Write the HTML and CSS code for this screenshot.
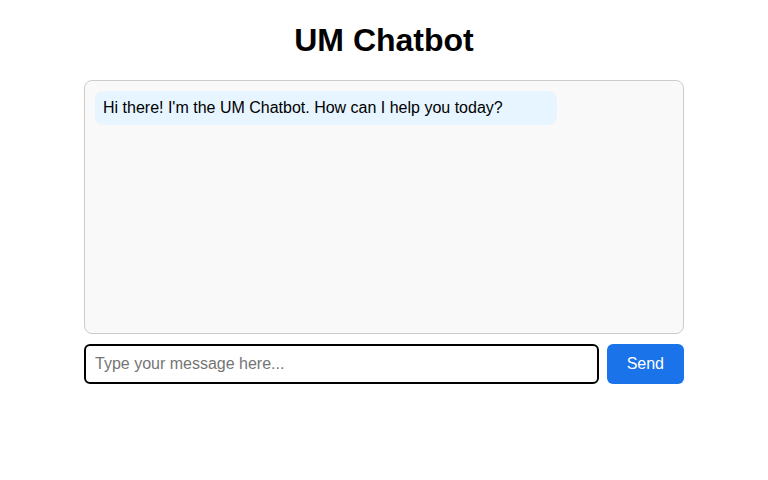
FILE: index.html
```html
<!DOCTYPE html>
<html lang="en">
<head>
  <meta charset="UTF-8">
  <meta name="viewport" content="width=device-width, initial-scale=1.0">
  <title>UM Chatbot</title>
  <link rel="stylesheet" href="styles.css">
</head>
<body>
  <h1>UM Chatbot</h1>

  <div id="chatBox" class="chat-box">
    <div class="message bot">Hi there! I'm the UM Chatbot. How can I help you today?</div>
  </div>

  <form id="chatForm" class="input-row">
    <input type="text" id="userInput" placeholder="Type your message here...">
    <button type="submit">Send</button>
  </form>
</body>
</html>
```

FILE: styles.css
```css
body {
  font-family: "Liberation Sans", Arial, sans-serif;
  max-width: 600px;
  margin: 0 auto;
  padding: 0;
  background-color: white;
}
h1 {
  text-align: center;
  font-size: 32px;
  margin: 22px 0 21px;
  line-height: 37px;
}
.chat-box {
  box-sizing: border-box;
  height: 254px;
  border: 1px solid #ccc;
  border-radius: 8px;
  padding: 10px;
  background-color: #f9f9f9;
  overflow-y: auto;
}
.message {
  box-sizing: border-box;
  width: 80%;
  padding: 8px;
  border-radius: 8px;
  font-size: 16px;
  line-height: 18px;
  margin-bottom: 10px;
}
.message.bot {
  background-color: #e6f5ff;
  color: #000;
}
.input-row {
  display: flex;
  gap: 8px;
  margin-top: 10px;
}
.input-row input {
  flex: 1;
  box-sizing: border-box;
  height: 40px;
  padding: 9px;
  font-family: inherit;
  font-size: 16px;
  border: 2px solid #000;
  border-radius: 6px;
  outline: none;
}
.input-row input::placeholder {
  color: #757575;
}
.input-row button {
  box-sizing: border-box;
  height: 40px;
  padding: 0 20px;
  font-family: inherit;
  font-size: 16px;
  background-color: #1a73e8;
  color: white;
  border: none;
  border-radius: 6px;
  cursor: pointer;
}
.input-row button:hover {
  background-color: #155ab6;
}
```
